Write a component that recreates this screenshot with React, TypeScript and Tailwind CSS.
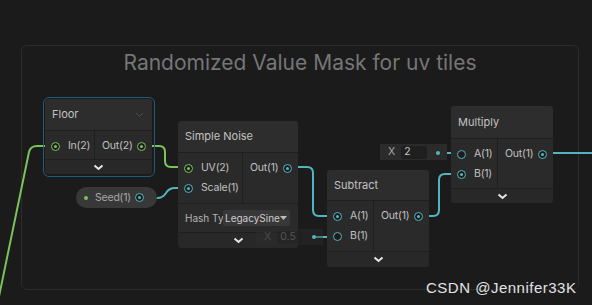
const GREEN = { ring: 'border-[#79c35b]', dot: 'bg-[#79c35b]' };
const CYAN = { ring: 'border-[#55b3bf]', dot: 'bg-[#55b3bf]' };

type PortColor = typeof GREEN;

function Port({ color, hollow = false }: { color: PortColor; hollow?: boolean }) {
  return (
    <span
      className={`flex h-[9px] w-[9px] shrink-0 items-center justify-center rounded-full border-[1.5px] bg-[#1c1c1c] ${color.ring}`}
    >
      {!hollow && <span className={`h-[3px] w-[3px] rounded-full ${color.dot}`} />}
    </span>
  );
}

function Chevron() {
  return (
    <svg width="11" height="7" viewBox="0 0 11 7">
      <polyline points="1.5,1.5 5.5,5 9.5,1.5" fill="none" stroke="#e6e6e6" strokeWidth="2" />
    </svg>
  );
}

type PortDef = { label: string; color: PortColor; hollow?: boolean };

function Node({
  x,
  y,
  w,
  inW,
  title,
  headerH,
  portsH,
  footerH,
  inputs,
  outputs,
  extra,
  menu,
}: {
  x: number;
  y: number;
  w: number;
  inW: number;
  title: string;
  headerH: number;
  portsH: number;
  footerH: number;
  inputs: PortDef[];
  outputs: PortDef[];
  extra?: React.ReactNode;
  menu?: boolean;
}) {
  return (
    <div
      className="absolute flex flex-col gap-px overflow-hidden rounded-[3px] bg-[#1f1f1f]"
      style={{ left: x, top: y, width: w }}
    >
      <div
        className="flex items-center justify-between bg-[#2d2d2d] pl-[7px] pr-[8px] text-[11px] text-[#c2c2c2]"
        style={{ height: headerH }}
      >
        <span>{title}</span>
        {menu && (
          <svg width="9" height="6" viewBox="0 0 9 6">
            <polyline points="1,1 4.5,4.5 8,1" fill="none" stroke="#4c4c4c" strokeWidth="1" />
          </svg>
        )}
      </div>
      <div className="flex gap-px text-[10.5px] tracking-[-0.2px] text-[#c0c0c0]" style={{ height: portsH }}>
        <div className="flex flex-col bg-[#2a2a2a] pt-[5px]" style={{ width: inW }}>
          {inputs.map((p) => (
            <div key={p.label} className="flex h-5 items-center gap-[8px] pl-[6px]">
              <Port color={p.color} hollow={p.hollow} />
              <span>{p.label}</span>
            </div>
          ))}
        </div>
        <div className="flex flex-1 flex-col bg-[#2a2a2a] pt-[5px]">
          {outputs.map((p) => (
            <div key={p.label} className="flex h-5 items-center justify-between pl-[7px] pr-[6px]">
              <span>{p.label}</span>
              <Port color={p.color} hollow={p.hollow} />
            </div>
          ))}
        </div>
      </div>
      {extra}
      <div className="flex items-center justify-center bg-[#282828]" style={{ height: footerH }}>
        <Chevron />
      </div>
    </div>
  );
}

export default function App() {
  return (
    <div className="relative h-[305px] w-[592px] overflow-hidden bg-[#1b1b1b] font-[Inter,'Noto_Sans',sans-serif]">
      {/* group frame */}
      <div className="absolute left-[21px] top-[45px] h-[245px] w-[558px] rounded-[6px] border border-[#2c2c2c]">
        <p className="mt-[1px] text-center text-[21px] text-[#767676]">
          Randomized Value Mask for uv tiles
        </p>
      </div>

      {/* wires */}
      <svg className="absolute left-0 top-0" width="592" height="305" fill="none" strokeWidth="2">
        <path d="M -3 306 L 29 152 Q 30.5 146 37 146 L 52 146" stroke="#79c35b" />
        <path d="M 146 146 L 159 146 Q 165 146 165 152 L 165 161 Q 165 167 171 167 L 184 167" stroke="#79c35b" />
        <path d="M 144 198 L 157 198 Q 163 198 166 193 Q 169 188 175 188 L 184 188" stroke="#55b3bf" />
        <path d="M 292 167 L 307 167 Q 313 167 313 173 L 313 210 Q 313 216 319 216 L 333 216" stroke="#55b3bf" />
        <path d="M 314 237 L 333 237" stroke="#55b3bf" />
        <path d="M 422 216 L 433 216 Q 439 216 439 210 L 439 180 Q 439 174 445 174 L 458 174" stroke="#55b3bf" />
        <path d="M 438 153 L 458 153" stroke="#55b3bf" />
        <path d="M 547 153 L 594 153" stroke="#55b3bf" />
      </svg>

      {/* Floor, selected */}
      <div className="absolute left-[43px] top-[97px] h-[80px] w-[112px] rounded-[6px] border border-[#1f5c7a]" />
      <Node
        x={45}
        y={99}
        w={107}
        inW={49}
        title="Floor"
        headerH={31}
        portsH={28}
        footerH={14}
        menu
        inputs={[{ label: 'In(2)', color: GREEN }]}
        outputs={[{ label: 'Out(2)', color: GREEN }]}
      />

      {/* Simple Noise */}
      <Node
        x={178}
        y={121}
        w={120}
        inW={64}
        title="Simple Noise"
        headerH={31}
        portsH={50}
        footerH={15}
        inputs={[
          { label: 'UV(2)', color: GREEN },
          { label: 'Scale(1)', color: CYAN },
        ]}
        outputs={[{ label: 'Out(1)', color: CYAN }]}
        extra={
          <div className="flex h-[28px] items-center bg-[#2a2a2a] pl-[7px] text-[10px] text-[#b4b4b4]">
            <span className="w-[38px] whitespace-nowrap">Hash Ty</span>
            <span className="flex h-[16px] w-[67px] items-center justify-between rounded-[2px] bg-[#383838] pl-[2px] pr-[3px] text-[#cccccc]">
              <span className="whitespace-nowrap">LegacySine</span>
              <svg width="7" height="4" viewBox="0 0 7 4">
                <polygon points="0,0 7,0 3.5,4" fill="#bdbdbd" />
              </svg>
            </span>
          </div>
        }
      />

      {/* Subtract */}
      <Node
        x={327}
        y={170}
        w={102}
        inW={46}
        title="Subtract"
        headerH={30}
        portsH={50}
        footerH={15}
        inputs={[
          { label: 'A(1)', color: CYAN },
          { label: 'B(1)', color: CYAN, hollow: true },
        ]}
        outputs={[{ label: 'Out(1)', color: CYAN }]}
      />

      {/* Multiply */}
      <Node
        x={451}
        y={106}
        w={102}
        inW={46}
        title="Multiply"
        headerH={32}
        portsH={49}
        footerH={14}
        inputs={[
          { label: 'A(1)', color: CYAN, hollow: true },
          { label: 'B(1)', color: CYAN },
        ]}
        outputs={[{ label: 'Out(1)', color: CYAN }]}
      />

      {/* Seed property */}
      <div className="absolute left-[76px] top-[187px] flex h-[21px] w-[81px] items-center rounded-full bg-[#383838] pl-[8px] pr-[13px] text-[10.5px] tracking-[-0.2px] text-[#a8a8a8]">
        <span className="h-[4px] w-[4px] rounded-full bg-[#79c35b]" />
        <span className="ml-[7px] flex-1">Seed(1)</span>
        <Port color={CYAN} />
      </div>

      {/* inline value X 2 */}
      <div className="absolute left-[380px] top-[144px] flex h-[16px] w-[67px] items-center bg-[#2b2b2b] pl-[8px] text-[10.5px] text-[#a8a8a8]">
        <span>X</span>
        <span className="ml-[6px] flex h-[13px] w-[26px] items-center rounded-[2px] bg-[#1f1f1f] pl-[3px] text-[#c8c8c8]">2</span>
      </div>
      <span className="absolute left-[436px] top-[151px] h-[4px] w-[4px] rounded-full bg-[#55b3bf]" />

      {/* inline value X 0.5, faded */}
      <div className="absolute left-[256px] top-[229px] flex h-[16px] w-[67px] items-center bg-[#2e2e2e]/40 pl-[8px] text-[10.5px] text-[#4c4c4c]">
        <span>X</span>
        <span className="ml-[6px] flex h-[13px] w-[26px] items-center rounded-[2px] bg-[#1f1f1f]/40 pl-[3px] text-[#555]">0.5</span>
      </div>
      <span className="absolute left-[312px] top-[235px] h-[4px] w-[4px] rounded-full bg-[#55b3bf]" />

      {/* watermark */}
      <p className="absolute left-[426px] top-[280px] whitespace-nowrap font-['Liberation_Sans',Arial,sans-serif] text-[15px] leading-none tracking-[0.5px] text-[#e2e2e2]">
        CSDN @Jennifer33K
      </p>
    </div>
  );
}
